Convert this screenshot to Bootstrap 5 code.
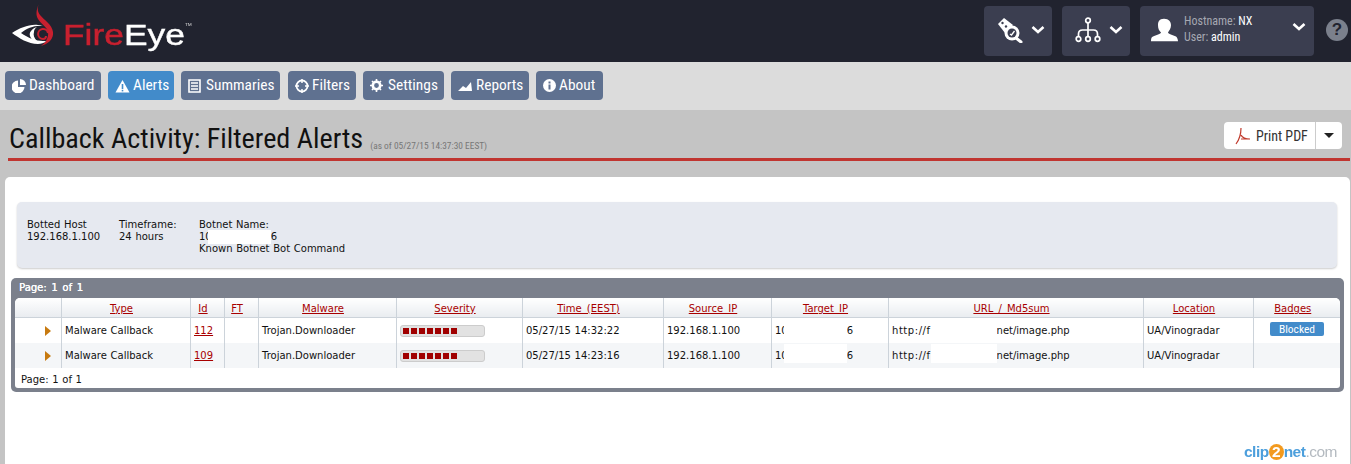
<!DOCTYPE html>
<html lang="en">
<head>
<meta charset="utf-8">
<title>FireEye - Callback Activity</title>
<link href="https://cdn.jsdelivr.net/npm/bootstrap@5.3.0/dist/css/bootstrap.min.css" rel="stylesheet">
<style>
html,body{height:464px;overflow:hidden}
body{background:#c4c4c4;font-family:"Roboto Condensed","Liberation Sans Narrow",Roboto,sans-serif;position:relative}
.top-bar{height:62px;background:#21232f;padding:6px 3px 6px 12px}
.logo-wrap{height:50px;margin-top:-6px}
.logo-word{font-family:"Liberation Sans",sans-serif;font-size:30px;line-height:30px;color:#c8202f;margin-left:1px;margin-top:20px;transform:scaleX(1.18);transform-origin:0 50%;-webkit-text-stroke:.4px currentColor;white-space:nowrap}
.logo-word b{font-weight:400;color:#fff}
.logo-word sup{font-size:4px;color:#ddd;top:-19px;vertical-align:baseline;position:relative;-webkit-text-stroke:0}
.top-btn{height:50px;background:#3b3e50;border-radius:4px;color:#fff}
.tb-icon{width:68px;margin-right:10px;padding:11px 0 0 13px}
.tb-chev{margin:8px 0 0 8px}
.tb-user{width:174px;padding:6px 8px 0 11px;margin-right:12px}
.user-glyph{margin-top:6px}
.user-text{font-size:12px;line-height:16px;color:#a6a8b2;margin-left:6px;padding-top:1px}
.user-text b{font-weight:400;color:#fff}
.user-chev{margin-top:10px}
.help-dot{width:22px;height:22px;border-radius:50%;background:#7b808c;color:#21232f;font:700 17px/22px "Liberation Sans",sans-serif;text-align:center;margin-top:13px}
.nav-strip{height:48px;background:#dcdcdc;padding:9px 5px 0;gap:7px}
.nav-btn{height:29px;background:#5f7190;color:#fff;border:0;border-radius:4px;font-size:15.400px;line-height:29px;padding:0 0 0 7px;gap:3px;text-decoration:none;white-space:nowrap}
.nav-btn.on{background:#428bca}
.nb-dash{width:96px}.nb-alert{width:66px}.nb-summ{width:99px}.nb-filt{width:68px;margin-left:1px}.nb-sett{width:81px}.nb-rep{width:78px}.nb-about{width:67px}
.icon-gap{margin-right:2px}
.title-band{height:48px;padding:0 9px 0 9px}
.title-main{font-size:28.200px;line-height:1;color:#111;font-weight:400;margin:15px 0 0;white-space:nowrap}
.title-asof{font-size:9.400px;color:#777;margin:29px 0 0 7px}
.pdf-grp{margin-top:12px;height:27px;background:#fff;border-radius:4px}
.pdf-main{width:92px;font-size:14px;color:#333;line-height:29px;border-right:1px solid #ccc;gap:5px;padding-left:11px}
.pdf-glyph{margin-top:6px}
.pdf-caret{width:26px}
.caret-shape{width:0;height:0;border:5px solid transparent;border-top-color:#222;border-bottom:0}
.red-rule{height:3px;background:#c03530;margin-left:8px;margin-right:1px}
.sheet{background:#fff;border-radius:5px 5px 0 0;margin:16px 1px 0 5px;height:287px;padding:25px 6px 0 6px}
.dv{font-family:"DejaVu Sans",Verdana,sans-serif;font-size:10px;line-height:12px;color:#111;word-spacing:.5px}
.sum-box{margin:0 7px 0 6px;height:66px;background:#e6e9f0;border-radius:5px;padding:17px 10px 0;box-shadow:0 1px 2px #ccc}
.sum-col1{width:92px}.sum-col2{width:80px}
.redact{display:inline-block;background:#fff;vertical-align:top;position:relative}
.r1{width:63px;height:14px;margin:-1px 0 -1px -4px}
.grid-box{margin-top:10px;height:114px;background:#7b808c;border-radius:5px;padding:0 4px 4px}
.grid-head{height:20px;color:#fff;padding:4px 4px 0;word-spacing:1.500px;text-shadow:.3px 0 0 #fff}
.grid-inner{background:#fff;height:90px;border-radius:5px 5px 3px 3px;overflow:hidden}
.al-table{table-layout:fixed;width:1325px;margin:0;border-collapse:collapse}
.al-table th,.al-table td{border:0;border-right:1px solid #ccd3da;padding:0 3px 0 3.500px;vertical-align:middle;font-weight:400;white-space:nowrap;overflow:hidden;box-shadow:none;background:transparent;color:#111}
.al-table th{height:19px;padding:3px 10px 0 2px;text-align:center;word-spacing:2px;background:linear-gradient(#fff,#e9ecf0);border-bottom:1px solid #ccd3da}
.al-table tbody tr:nth-child(1) td{height:26px;background:#fff;padding-top:1px}
.al-table tbody tr:nth-child(2) td{height:25px;background:#f4f6f8}
.al-table a{color:#a80000}
.al-table th:last-child,.al-table td:last-child{border-right:0}
.c1{width:46px}.c2{width:129px}.c3,.c4{width:34px}.c5{width:138px}.c6{width:126px}.c7{width:141px}.c8{width:108px}.c9{width:117px}.c10{width:255px}.c11{width:110px}.c12{width:87px}
.arrow-shape{display:block;width:0;height:0;margin:0 0 0 26px;border-left:6px solid #c77a10;border-top:5px solid transparent;border-bottom:5px solid transparent}
.sev{width:85px;height:12px;background:#e2e2e2;border:1px solid #ccc;border-radius:3px;padding:2px;gap:2px;margin-left:-.5px}
.sev i{display:block;width:6px;height:6px;background:#a00000}
.url-head{letter-spacing:.55px}
.r2,.r3{height:19px}
.r2{width:63px;margin:-6px 0 -1px -4px}
.r3{width:66px;margin:-6px 0 -1px 0}
.blocked{width:54px;height:14px;background:#428bca;color:#fff;border-radius:2px;font-family:"Roboto Condensed","Liberation Sans Narrow",Roboto,sans-serif;font-size:11.500px;font-weight:400;line-height:14px;text-align:center;margin:-3px auto 0}
.grid-foot{padding:6px 6px 0}
.watermark{position:absolute;right:14px;bottom:3px;font:700 15.500px/18px "Liberation Sans",sans-serif;color:#4d9fdc;filter:blur(.5px);letter-spacing:-.5px}
.watermark .two{display:inline-block;width:15px;height:16px;line-height:16px;border-radius:50%;background:#f39a1e;color:#fff;text-align:center}
.watermark .dom{color:#b4bac0;font-weight:400}
</style>
</head>
<body>
<div class="top-bar d-flex">
  <div class="logo-wrap d-flex flex-grow-1">
    <svg width="50" height="52" viewBox="0 0 50 52">
      <path d="M28 2c-3 5-3 9 0 13 4 5 12 9 13 17 1 7-5 12-12 14 4-3 8-8 7-14-1-5-7-8-10-13-3-5-1-12 2-17z" fill="#c8202f"/>
      <path d="M36 33a5 5 0 1 0-5 6c2 0 3-1 3-3" fill="none" stroke="#c8202f" stroke-width="2"/>
      <path d="M0 33c8-5 17-9 26-8 2 0 4 .5 5 1-8-1-16 2-22 7 7 5 15 8 22 8 1 0 2 0 3 .5-2 1.500-5 2.500-8 2.500-10 0-19-6-26-11z" fill="#fff"/>
      <path d="M25 27c-6 2-8 6-7 9 1 3 3 5 7 5-3-3-4-6-3-9 0-2 1-4 3-5z" fill="#fff"/>
    </svg>
    <div class="logo-word">Fire<b>Eye</b><sup>TM</sup></div>
  </div>
  <div class="top-btn tb-icon d-flex">
    <svg width="26" height="26" viewBox="0 0 26 26"><path d="M1 7 7 1l9 7-8 8z" fill="#fff"/><circle cx="5.500" cy="6" r="1.200" fill="#3b3e50"/><circle cx="9" cy="9.500" r="1.200" fill="#3b3e50"/><circle cx="15" cy="16" r="7.500" fill="#fff"/><path d="m19 21 5 4" stroke="#fff" stroke-width="3" stroke-linecap="round"/><circle cx="15" cy="16" r="4.500" fill="#3b3e50"/><path d="m13 17 1.500 1 3-4" fill="none" stroke="#fff" stroke-width="1.300"/></svg>
    <svg class="tb-chev" width="14" height="10" viewBox="0 0 14 10"><path d="m1.500 2 5.500 5 5.500-5" fill="none" stroke="#fff" stroke-width="2.600"/></svg>
  </div>
  <div class="top-btn tb-icon d-flex">
    <svg width="26" height="26" viewBox="0 0 26 26" fill="none" stroke="#fff" stroke-width="1.700"><circle cx="13" cy="3.500" r="2.300"/><path d="M13 6v14M3.500 20v-3c0-3 2-4 4-4h11c2 0 4 1 4 4v3"/><circle cx="3.500" cy="22" r="2.300"/><circle cx="13" cy="22" r="2.300"/><circle cx="22.500" cy="22" r="2.300"/></svg>
    <svg class="tb-chev" width="14" height="10" viewBox="0 0 14 10"><path d="m1.500 2 5.500 5 5.500-5" fill="none" stroke="#fff" stroke-width="2.600"/></svg>
  </div>
  <div class="top-btn tb-user d-flex">
    <svg class="user-glyph" width="27" height="24" viewBox="0 0 27 30" preserveAspectRatio="none"><path d="M13 1c5 0 7 4 7 8s-2 7-3 9c0 2 5 3 8 5 1 1 2 4 2 6H0c0-2 0-5 2-6 3-2 8-3 8-5-2-2-3-5-3-9s1-8 6-8z" fill="#fff"/></svg>
    <div class="user-text flex-grow-1">Hostname: <b>NX</b><br>User: <b>admin</b></div>
    <svg class="user-chev" width="14" height="10" viewBox="0 0 14 10"><path d="m1.500 2 5.500 5 5.500-5" fill="none" stroke="#fff" stroke-width="2.600"/></svg>
  </div>
  <div class="help-dot">?</div>
</div>

<nav class="nav-strip d-flex">
  <a class="nav-btn nb-dash d-flex align-items-center" href="#"><svg width="14" height="14" viewBox="0 0 14 14"><path d="M6 1.500V8h6.500A6.500 6.500 0 1 1 6 1.500z" fill="#fff"/><path d="M8 0a6 6 0 0 1 6 6H8z" fill="#fff"/></svg>Dashboard</a>
  <a class="nav-btn nb-alert on d-flex align-items-center" href="#"><svg width="15" height="14" viewBox="0 0 15 14"><path d="M7.500 1 14.500 13.500H.5z" fill="#fff"/><rect x="6.700" y="5" width="1.600" height="5" fill="#428bca"/><rect x="6.700" y="10.800" width="1.600" height="1.600" fill="#428bca"/></svg>Alerts</a>
  <a class="nav-btn nb-summ d-flex align-items-center" href="#"><svg class="icon-gap" width="13" height="14" viewBox="0 0 13 14"><path d="M1 1h11v12H1z" fill="none" stroke="#fff" stroke-width="1.600"/><path d="M3 4h7M3 7h7M3 10h7" stroke="#fff" stroke-width="1.300"/></svg>Summaries</a>
  <a class="nav-btn nb-filt d-flex align-items-center" href="#"><svg width="14" height="14" viewBox="0 0 14 14" fill="none" stroke="#fff"><circle cx="7" cy="7" r="5.500" stroke-width="1.800"/><path d="M7 0v4M7 10v4M0 7h4M10 7h4" stroke-width="1.500"/></svg>Filters</a>
  <a class="nav-btn nb-sett d-flex align-items-center" href="#"><svg class="icon-gap" width="13" height="13" viewBox="0 0 13 13"><circle cx="6.500" cy="6.500" r="3.700" fill="none" stroke="#fff" stroke-width="2.600"/><path d="M6.500 0v13M0 6.500h13M2 2l9 9M11 2l-9 9" stroke="#fff" stroke-width="1.600" stroke-dasharray="2.200 8.600 2.200"/></svg>Settings</a>
  <a class="nav-btn nb-rep d-flex align-items-center" href="#"><svg width="15" height="12" viewBox="0 0 15 12"><path d="M0 11 5 6l3 2 5-6 1 9z" fill="#fff"/></svg>Reports</a>
  <a class="nav-btn nb-about d-flex align-items-center" href="#"><svg width="13" height="13" viewBox="0 0 13 13"><circle cx="6.500" cy="6.500" r="6.500" fill="#fff"/><rect x="5.500" y="5.500" width="2" height="5" fill="#5f7190"/><rect x="5.500" y="2.500" width="2" height="2" fill="#5f7190"/></svg>About</a>
</nav>

<div class="title-band d-flex justify-content-between">
  <div class="d-flex">
    <h1 class="title-main">Callback Activity: Filtered Alerts</h1>
    <div class="title-asof">(as of 05/27/15 14:37:30 EEST)</div>
  </div>
  <div class="pdf-grp d-flex">
    <div class="pdf-main d-flex">
      <svg class="pdf-glyph" width="16" height="17" viewBox="0 0 16 17" fill="none" stroke="#c0392b" stroke-width="1.200"><path d="M6 0C6 6 4 12 1 16M6 7c1 2 3 4 9 4H6"/></svg>Print PDF
    </div>
    <div class="pdf-caret d-flex align-items-center justify-content-center"><span class="caret-shape"></span></div>
  </div>
</div>
<div class="red-rule"></div>

<main class="sheet">
  <div class="sum-box dv d-flex">
    <div class="sum-col1">Botted Host<br>192.168.1.100</div>
    <div class="sum-col2">Timeframe:<br>24 hours</div>
    <div>Botnet Name:<br>10<span class="redact r1"></span>6<br>Known Botnet Bot Command</div>
  </div>
  <div class="grid-box dv">
    <div class="grid-head">Page: 1 of 1</div>
    <div class="grid-inner">
      <table class="table al-table dv">
        <thead><tr>
          <th class="c1"></th><th class="c2"><a href="#">Type</a></th><th class="c3"><a href="#">Id</a></th><th class="c4"><a href="#">FT</a></th><th class="c5"><a href="#">Malware</a></th><th class="c6"><a href="#">Severity</a></th><th class="c7"><a href="#">Time (EEST)</a></th><th class="c8"><a href="#">Source IP</a></th><th class="c9"><a href="#">Target IP</a></th><th class="c10"><a href="#">URL / Md5sum</a></th><th class="c11"><a href="#">Location</a></th><th class="c12"><a href="#">Badges</a></th>
        </tr></thead>
        <tbody>
          <tr><td><span class="arrow-shape"></span></td><td>Malware Callback</td><td><a href="#">112</a></td><td></td><td>Trojan.Downloader</td><td><div class="sev d-flex"><i></i><i></i><i></i><i></i><i></i><i></i><i></i></div></td><td>05/27/15 14:32:22</td><td>192.168.1.100</td><td>10<span class="redact r2"></span>6</td><td><span class="url-head">http://f</span><span class="redact r3"></span>net/image.php</td><td>UA/Vinogradar</td><td><div class="blocked">Blocked</div></td></tr>
          <tr><td><span class="arrow-shape"></span></td><td>Malware Callback</td><td><a href="#">109</a></td><td></td><td>Trojan.Downloader</td><td><div class="sev d-flex"><i></i><i></i><i></i><i></i><i></i><i></i><i></i></div></td><td>05/27/15 14:23:16</td><td>192.168.1.100</td><td>10<span class="redact r2"></span>6</td><td><span class="url-head">http://f</span><span class="redact r3"></span>net/image.php</td><td>UA/Vinogradar</td><td></td></tr>
        </tbody>
      </table>
      <div class="grid-foot">Page: 1 of 1</div>
    </div>
  </div>
</main>
<div class="watermark">clip<span class="two">2</span>net<span class="dom">.com</span></div>
<script src="https://cdn.jsdelivr.net/npm/bootstrap@5.3.0/dist/js/bootstrap.bundle.min.js"></script>
</body>
</html>
